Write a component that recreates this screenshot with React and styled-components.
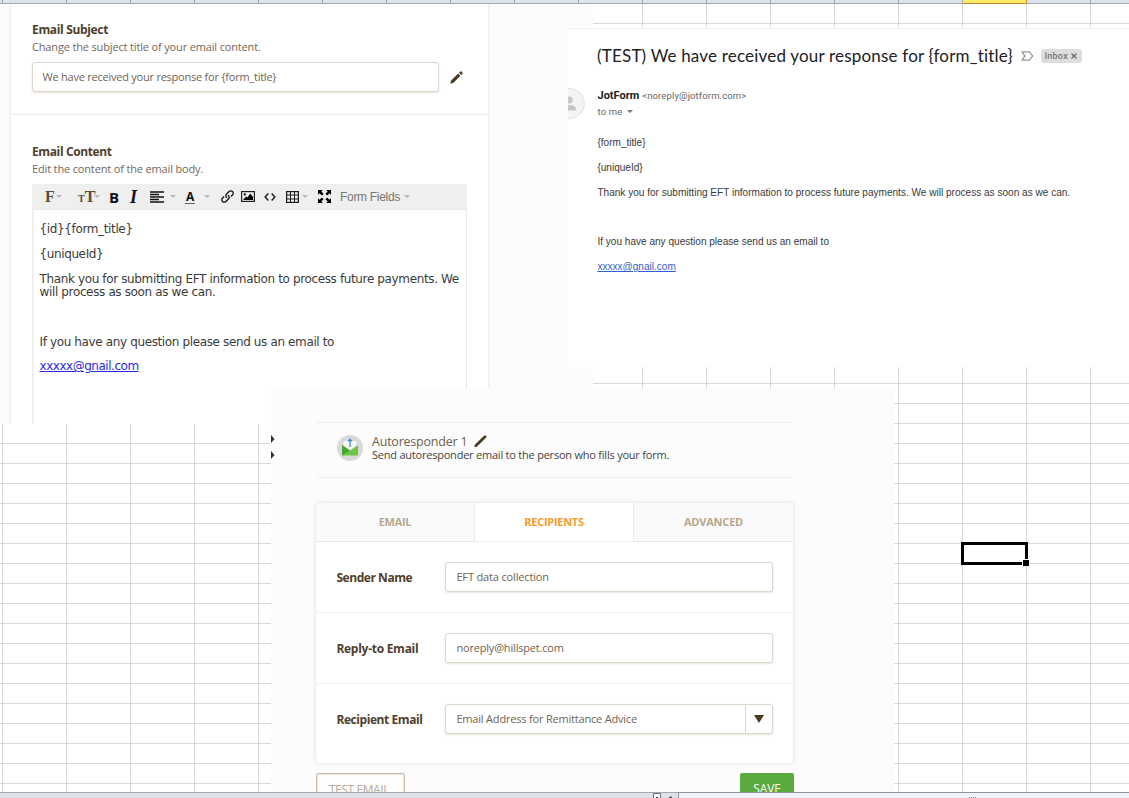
import React from 'react';
import styled, { createGlobalStyle, css } from 'styled-components';
import { ImLink } from 'react-icons/im';

const GlobalStyle = createGlobalStyle`
  * {
    box-sizing: border-box;
  }

  body {
    margin: 0;
    overflow: hidden;
  }

  p {
    margin: 0;
  }
`;

const ui = "'Open Sans', 'Noto Sans', sans-serif";
const arial = "'Liberation Sans', Arial, sans-serif";

/* spreadsheet */

const Sheet = styled.main`
  position: relative;
  display: flex;
  flex-direction: column;
  width: 1129px;
  height: 798px;
  overflow: hidden;
  background: #fff;
  font-family: ${ui};
`;

const ColumnHeaders = styled.div`
  display: flex;
  height: 4px;
  flex: none;
  background: #dee2ea;
  border-bottom: 1px solid #a5a8b0;
`;

const ColumnHeader = styled.div`
  flex: none;
  width: ${({ $width }) => $width || 64}px;
  height: ${({ $active }) => ($active ? 4 : 3)}px;
  border-right: 1px solid ${({ $active }) => ($active ? '#c08a2c' : '#a5a8b0')};
  ${({ $active }) =>
    $active &&
    css`
      background: #ffe965;
      border-bottom: 1px solid #c08a2c;
    `}
`;

const Cells = styled.div`
  flex: 1;
  background-image: linear-gradient(to right, #d9d9d9 1px, transparent 1px),
    linear-gradient(to bottom, #d9d9d9 1px, transparent 1px);
  background-size: 64px 20px;
  background-position: 2px 19px;
`;

const SelectedCell = styled.div`
  position: absolute;
  left: 961px;
  top: 542px;
  width: 67px;
  height: 23px;
  border: 3px solid #000;

  &::after {
    content: '';
    position: absolute;
    right: -4px;
    bottom: -4px;
    width: 6px;
    height: 6px;
    background: #000;
    border: 0 solid #fff;
    border-width: 1px 0 0 1px;
  }
`;

const BottomBar = styled.footer`
  display: flex;
  height: 6px;
  flex: none;
  background: #dde2e8;
  border-top: 1px solid #a3a9b3;
`;

const TabSplit = styled.div`
  display: flex;
  width: 25px;
  height: 5px;
  margin-left: 653px;
`;

const ScrollTrack = styled.div`
  flex: 1;
  display: flex;
  justify-content: center;
  align-items: flex-end;
  padding-left: 136px;
  margin-top: -1px;
  background: #eef1f6;
  border: 1px solid #8b939e;
  border-width: 1px 0 0 1px;
`;

const Grip = styled.i`
  width: 7px;
  height: 1px;
  background: repeating-linear-gradient(to right, #888 0 1px, transparent 1px 2px);
`;

/* shared */

const Text = styled.span`
  display: inline-block;
  white-space: nowrap;
  letter-spacing: ${({ $ls }) => $ls || 0}px;
`;

const Label = styled.div`
  height: ${({ $tall }) => ($tall ? 17 : 16)}px;
  padding-top: ${({ $tall }) => ($tall ? 1 : 0)}px;
  font: 700 12px/16px ${ui};
  color: #4f402c;
`;

const Hint = styled.div`
  height: 16px;
  margin: 1px 0 7px;
  font: 400 11px/16px ${ui};
  color: #73675a;
`;

const Field = styled.div`
  display: flex;
  align-items: center;
  width: ${({ $width }) => $width}px;
  height: 30px;
  padding-left: ${({ $pad }) => $pad || 10}px;
  font: 400 11px/16px ${ui};
  color: #6f6454;
  background: #fff;
  border: 1px solid #e0d7cc;
  border-radius: 3px;
  box-shadow: 0 1px 2px rgba(120, 100, 70, 0.18);
`;

const Caret = styled.i`
  width: 0;
  height: 0;
  border: ${({ $size }) => $size || 3}px solid transparent;
  border-top-width: ${({ $size, $drop }) => $drop || $size || 3}px;
  border-bottom: 0;
  border-top-color: ${({ $color }) => $color || '#b3bac0'};
  margin-left: ${({ $gap }) => $gap || 0}px;
`;

/* email editor */

const EditorWindow = styled.section`
  position: absolute;
  left: 0;
  top: 4px;
  width: 593px;
  height: 420px;
  overflow: hidden;
  background: #fcfcfc;
`;

const EditorCard = styled.div`
  width: 477px;
  height: 440px;
  margin-left: 11px;
  background: #fff;
  box-shadow: 0 0 0 1px #f0f0f0, 0 0 3px 1px #efefef;
`;

const Section = styled.div`
  padding: ${({ $top }) => $top}px 0 0 21px;
  height: ${({ $height }) => $height}px;
  border-bottom: 1px solid #ececec;
`;

const FieldRow = styled.div`
  display: flex;
  align-items: center;
  gap: 11px;
`;

const RichText = styled.div`
  width: 435px;
  height: 300px;
  border: 1px solid #efefef;
  border-width: 0 1px 0 2px;
  border-right-color: #e9e9e9;
  border-radius: 2px 2px 0 0;
`;

const Toolbar = styled.div`
  display: flex;
  align-items: center;
  height: 26px;
  margin: 0 -1px 0 -2px;
  padding-left: 13px;
  background: #efefef;
  border-radius: 2px 2px 0 0;
  border-bottom: 1px solid #e9e9e9;
`;

const Tool = styled.span`
  flex: none;
  display: flex;
  align-items: center;
  width: ${({ $width }) => $width}px;
  height: 16px;
  white-space: nowrap;
  color: ${({ $color }) => $color || '#111'};
`;

const Glyph = styled.span`
  font-family: ${({ $sans }) => ($sans ? "'Open Sans', sans-serif" : "'Liberation Serif', serif")};
  font-size: ${({ $size }) => $size}px;
  font-weight: 700;
  font-style: ${({ $italic }) => ($italic ? 'italic' : 'normal')};
  line-height: ${({ $line }) => $line || 16}px;
  align-self: ${({ $low }) => ($low ? 'flex-end' : 'auto')};
`;

const ColorGlyph = styled(Glyph)`
  height: 13px;
  margin-top: 2px;
  padding: 0 1px;
  line-height: 11px;
  border-bottom: 1px solid #666;
`;

const FormFields = styled.span`
  font: 12px/16px ${arial};
  color: #777;
`;

const EditorBody = styled.div`
  padding: 13px 0 0 5.5px;
  font: 12px/13.5px 'DejaVu Sans', Verdana, sans-serif;
  color: #3b3b3b;

  p {
    min-height: 13.5px;
    margin-bottom: 11.3px;
  }
`;

const MailLink = styled(Text)`
  color: ${({ $color }) => $color};
  text-decoration: underline;
`;

/* received mail */

const MailWindow = styled.section`
  position: absolute;
  left: 568px;
  top: 27px;
  width: 561px;
  height: 340px;
  overflow: hidden;
  padding-top: 1px;
  background: #fff;
`;

const MailInner = styled.div`
  border-top: 1px solid #f1f1f1;
  padding-top: 14px;
`;

const SubjectRow = styled.div`
  display: flex;
  align-items: center;
  height: 26px;
  padding-left: 29px;
`;

const Subject = styled.h1`
  margin: 0;
  width: 424px;
  font: 400 17px/26px Lato, sans-serif;
  color: #202124;
`;

const InboxChip = styled.span`
  display: flex;
  align-items: center;
  gap: 3px;
  width: 41px;
  height: 14px;
  margin-left: 7px;
  padding-left: 3.5px;
  font: 500 9px/14px Roboto, sans-serif;
  color: #777;
  background: #ddd;
  border-radius: 3px;
`;

const MailHead = styled.div`
  display: flex;
  gap: 12.5px;
  margin-top: 19px;
  height: 32px;
`;

const Avatar = styled.div`
  width: 31px;
  height: 31px;
  margin-left: -14px;
  background: #f4f4f4;
  border: 1px solid #e2e2e2;
  border-radius: 50%;
  overflow: hidden;
`;

const SenderBlock = styled.div`
  margin-top: -1px;
`;

const Sender = styled.div`
  font: 400 9.5px/15px Roboto, sans-serif;
  color: #666;
  display: flex;
  align-items: center;
  height: 16px;

  b {
    margin-right: 3px;
    font-size: 11px;
    color: #202124;
  }
`;

const MailBody = styled.div`
  padding: 16px 0 0 29.4px;
  font: 10.07px/13px ${arial};
  color: #3a3a3a;

  p {
    min-height: 13px;
    margin-bottom: 11.8px;
  }
`;

/* autoresponder settings */

const ResponderWindow = styled.section`
  position: absolute;
  left: 271px;
  top: 389px;
  width: 623px;
  height: 403px;
  overflow: hidden;
  padding: 33px 100px 0 45px;
  background: #fcfcfc;
`;

const EdgeMarks = styled.svg`
  position: absolute;
  left: 0;
  top: 45px;
`;

const ResponderHead = styled.header`
  display: flex;
  gap: 9px;
  height: 56px;
  padding: 12px 0 0 20px;
  border: 1px solid #eee;
  border-left-color: transparent;
  border-right-color: transparent;
  border-radius: 4px;
`;

const HeadTitle = styled.div`
  display: flex;
  gap: 7px;
  height: 13px;
  font: 400 12.5px/13px ${ui};
  color: #6e5f4e;
`;

const HeadText = styled.div`
  font: 400 11px/14px ${ui};
  color: #444;
`;

const SettingsCard = styled.div`
  width: 477px;
  margin-top: 25px;
  height: 260px;
  background: #fff;
  border-radius: 3px;
  box-shadow: 0 0 0 1px #efefef, 0 0 4px 1px #e9e9e9;
`;

const Tabs = styled.nav`
  display: grid;
  grid-template-columns: 158px 159px 1fr;
  height: 39px;
`;

const Tab = styled.div`
  display: flex;
  align-items: center;
  justify-content: center;
  font: 700 11px/16px ${ui};
  color: ${({ $active }) => ($active ? '#fb9a1f' : '#b8a78f')};
  background: ${({ $active }) => ($active ? '#fff' : '#fafafa')};
  border-bottom: 1px solid ${({ $active }) => ($active ? '#f1f1f1' : '#e8e6e2')};
  border-left: ${({ $divided }) => ($divided ? '1px solid #ecebe8' : '0')};
`;

const SettingRow = styled.div`
  display: grid;
  grid-template-columns: 109px 1fr;
  align-items: center;
  height: 71px;
  padding-left: 20.4px;
  border-bottom: 1px solid ${({ $last }) => ($last ? 'transparent' : '#f0f0f0')};
`;

const DropButton = styled.span`
  display: flex;
  align-items: center;
  justify-content: center;
  width: 27px;
  height: 28px;
  margin-left: auto;
  border-left: 1px solid #e0d7cc;
`;

const Actions = styled.div`
  display: flex;
  justify-content: space-between;
  margin-top: 10px;
`;

const Button = styled.div`
  height: 34px;
  width: ${({ $primary }) => ($primary ? 54 : 89)}px;
  padding-right: ${({ $primary }) => ($primary ? 0 : 3)}px;
  text-align: center;
  font: 400 12px/31px ${ui};
  color: ${({ $primary }) => ($primary ? '#fff' : '#bbaa94')};
  background: ${({ $primary }) => ($primary ? '#5aaa3f' : '#fdfdfd')};
  border: ${({ $primary }) => ($primary ? '0' : '1px solid #cbbca9')};
  box-shadow: ${({ $primary }) => ($primary ? 'none' : 'inset 0 0 0 1px #eee7df')};
  border-radius: 2px;
`;

const Pencil = () => (
  <svg width="13" height="13" viewBox="0 0 13 13" fill="#4a3a26">
    <path d="M0.3 12.7 L1.2 9.5 L8.2 2.6 L10.4 4.8 L3.5 11.8 Z" />
    <path d="M9 1.7 L10.3 0.4 Q11 0 11.6 0.6 L12.4 1.4 Q13 2 12.5 2.7 L11.3 4 Z" />
  </svg>
);

const SlimPencil = () => (
  <svg width="13" height="13" viewBox="0 0 13 13" fill="#4a3a26">
    <path d="M0.4 12.2 L0.8 9.8 L10.3 0.4 L12.3 0.5 L12.2 2.4 L2.8 11.8 Z" />
  </svg>
);

const AlignIcon = () => (
  <svg width="14" height="12" viewBox="0 0 14 12" stroke="#111" strokeWidth="1.6">
    <path d="M0 1H14M0 3.5H9M0 6H14M0 8.5H9M0 11H14" />
  </svg>
);

const ImageIcon = () => (
  <svg width="14" height="11" viewBox="0 0 14 11">
    <rect x="0.6" y="0.6" width="12.8" height="9.8" fill="none" stroke="#222" strokeWidth="1.2" />
    <circle cx="3.8" cy="3.4" r="1.1" />
    <path d="M2 9 L5 5.4 L6.3 6.6 L9.3 2.6 L12 6 V9 Z" />
  </svg>
);

const CodeIcon = () => (
  <svg width="12" height="8" viewBox="0 0 12 8" fill="none" stroke="#222" strokeWidth="1.5">
    <path d="M4.3 0.6 L1.2 4 L4.3 7.4 M7.7 0.6 L10.8 4 L7.7 7.4" />
  </svg>
);

const TableIcon = () => (
  <svg width="13" height="12" viewBox="0 0 13 12" fill="none" stroke="#1c1c1c">
    <rect x="0.6" y="0.6" width="11.8" height="10.8" strokeWidth="1.2" />
    <path d="M4.5 0V12M8.5 0V12M0 4H13M0 8H13" strokeWidth="1" />
  </svg>
);

const ExpandIcon = () => (
  <svg width="13" height="13" viewBox="0 0 13 13">
    <path d="M0 0H4.8L3.3 1.5L5.6 3.8L3.8 5.6L1.5 3.3L0 4.8Z M13 0V4.8L11.5 3.3L9.2 5.6L7.4 3.8L9.7 1.5L8.2 0Z M0 13V8.2L1.5 9.7L3.8 7.4L5.6 9.2L3.3 11.5L4.8 13Z M13 13H8.2L9.7 11.5L7.4 9.2L9.2 7.4L11.5 9.7L13 8.2Z" />
  </svg>
);

const ImportantMarker = () => (
  <svg width="13" height="10" viewBox="0 0 13 10" fill="none" stroke="#999" strokeWidth="1.3">
    <path d="M1 0.8 H8.3 L11.8 5 L8.3 9.2 H1 L4 5 Z" />
  </svg>
);

const PersonIcon = () => (
  <svg width="29" height="29" viewBox="0 0 29 29" fill="#c6c6c6">
    <circle cx="14.2" cy="11" r="3.6" />
    <path d="M6.8 21.5 V19.5 Q7 16 14.2 16 Q20.5 16 20.8 19.5 V21.5 Z" />
  </svg>
);

const MailBadge = () => (
  <svg width="26" height="26" viewBox="0 0 26 26">
    <circle cx="13" cy="13" r="13" fill="#d9d9d9" />
    <path d="M6.5 6 H19.5 V16 H6.5 Z" fill="#f7f7f7" />
    <path d="M5 10 L13 15.5 L21 10 V20.5 H5 Z" fill="#6cc644" />
    <path d="M5 10 L13 15.5 L5 20.5 Z" fill="#4ba532" />
    <path d="M13 12 V4.5 M11.2 6.2 L13 4.2 L14.8 6.2" fill="none" stroke="#3f8fd6" strokeWidth="1.3" />
  </svg>
);

const SplitMarks = () => (
  <svg width="22" height="5" viewBox="0 0 22 5">
    <path d="M0.5 5 V0.5 H7.5 V5" fill="#fff" stroke="#6d747e" />
    <path d="M3 4 H5 V5 H3 Z M18.5 3 V5 H15.5 Z" fill="#222" />
  </svg>
);

export default function App() {
  const headers = Array.from({ length: 17 }, (_, i) => i);

  return (
    <Sheet>
      <GlobalStyle />
      <ColumnHeaders>
        <ColumnHeader $width={3} />
        {headers.map((i) => (
          <ColumnHeader key={i} $active={i === 15} />
        ))}
      </ColumnHeaders>
      <Cells />
      <BottomBar>
        <TabSplit><SplitMarks /></TabSplit>
        <ScrollTrack><Grip /></ScrollTrack>
      </BottomBar>
      <SelectedCell />

      <EditorWindow>
        <EditorCard>
          <Section $top={18} $height={111}>
            <Label><Text $ls={-0.34}>Email Subject</Text></Label>
            <Hint><Text $ls={-0.155}>Change the subject title of your email content.</Text></Hint>
            <FieldRow>
              <Field $width={407} $pad={9.5}>
                <Text $ls={-0.23}>We have received your response for {'{form_title}'}</Text>
              </Field>
              <Pencil />
            </FieldRow>
          </Section>
          <Section $top={29} $height={400}>
            <Label><Text $ls={-0.38}>Email Content</Text></Label>
            <Hint><Text $ls={-0.155}>Edit the content of the email body.</Text></Hint>
            <RichText>
              <Toolbar>
                <Tool $width={33} $color="#5b4a35"><Glyph $size={16}>F</Glyph><Caret $gap={1} /></Tool>
                <Tool $width={31} $color="#5b4a35">
                  <Glyph $size={10} $line={12} $low>T</Glyph>
                  <Glyph $size={16}>T</Glyph>
                  <Caret $gap={-1} />
                </Tool>
                <Tool $width={21}><Glyph $size={15} $line={14} $sans>B</Glyph></Tool>
                <Tool $width={20}><Glyph $size={18} $italic>I</Glyph></Tool>
                <Tool $width={35}><AlignIcon /><Caret $gap={6} /></Tool>
                <Tool $width={36}><ColorGlyph $size={12} $sans>A</ColorGlyph><Caret $gap={9} /></Tool>
                <Tool $width={20}><ImLink size={13} /></Tool>
                <Tool $width={23}><ImageIcon /></Tool>
                <Tool $width={22}><CodeIcon /></Tool>
                <Tool $width={32}><TableIcon /><Caret $gap={3} /></Tool>
                <Tool $width={22}><ExpandIcon /></Tool>
                <FormFields><Text $ls={-0.3}>Form Fields</Text></FormFields>
                <Caret $gap={4} />
              </Toolbar>
              <EditorBody>
                <p><Text $ls={-0.36}>{'{id}{form_title}'}</Text></p>
                <p><Text $ls={-0.38}>{'{uniqueId}'}</Text></p>
                <p>
                  <Text $ls={-0.365}>Thank you for submitting EFT information to process future payments. We</Text>
                  <br />
                  <Text $ls={-0.36}>will process as soon as we can.</Text>
                </p>
                <p />
                <p><Text $ls={-0.37}>If you have any question please send us an email to</Text></p>
                <p><MailLink $color="#2a2ae8" $ls={-0.47}>xxxxx@gnail.com</MailLink></p>
              </EditorBody>
            </RichText>
          </Section>
        </EditorCard>
      </EditorWindow>

      <MailWindow>
        <MailInner>
          <SubjectRow>
            <Subject>
              <Text $ls={0.19}>(TEST) We have received your response for {'{form_title}'}</Text>
            </Subject>
            <ImportantMarker />
            <InboxChip>
              <Text $ls={0.25}>Inbox</Text>
              <svg width="6" height="6" viewBox="0 0 6 6" stroke="#666" strokeWidth="1.2">
                <path d="M0.5 0.5 L5.5 5.5 M5.5 0.5 L0.5 5.5" />
              </svg>
            </InboxChip>
          </SubjectRow>
          <MailHead>
            <Avatar><PersonIcon /></Avatar>
            <SenderBlock>
              <Sender>
                <b><Text>JotForm</Text></b>
                <Text $ls={0.12}>&lt;noreply@jotform.com&gt;</Text>
              </Sender>
              <Sender><Text $ls={0.15}>to me</Text><Caret $gap={5} $color="#777" /></Sender>
            </SenderBlock>
          </MailHead>
          <MailBody>
            <p><Text>{'{form_title}'}</Text></p>
            <p><Text>{'{uniqueId}'}</Text></p>
            <p>
              <Text>
                Thank you for submitting EFT information to process future payments. We will process as soon as we can.
              </Text>
            </p>
            <p />
            <p><Text>If you have any question please send us an email to</Text></p>
            <p><MailLink $color="#2f62d0">xxxxx@gnail.com</MailLink></p>
          </MailBody>
        </MailInner>
      </MailWindow>

      <ResponderWindow>
        <EdgeMarks width="4" height="26" viewBox="0 0 4 26" fill="#2b2f38">
          <path d="M0 1 L3.5 5 L0 9 Z M0 17 L3.5 21 L0 25 Z" />
        </EdgeMarks>
        <ResponderHead>
          <MailBadge />
          <div>
            <HeadTitle><Text $ls={-0.22}>Autoresponder 1</Text><SlimPencil /></HeadTitle>
            <HeadText><Text $ls={-0.22}>Send autoresponder email to the person who fills your form.</Text></HeadText>
          </div>
        </ResponderHead>
        <SettingsCard>
          <Tabs>
            <Tab><Text $ls={-0.27}>EMAIL</Text></Tab>
            <Tab $active $divided><Text $ls={-0.27}>RECIPIENTS</Text></Tab>
            <Tab $divided><Text $ls={-0.2}>ADVANCED</Text></Tab>
          </Tabs>
          <SettingRow>
            <Label $tall><Text $ls={-0.45}>Sender Name</Text></Label>
            <Field $width={328}><Text $ls={-0.15}>EFT data collection</Text></Field>
          </SettingRow>
          <SettingRow>
            <Label $tall><Text $ls={-0.27}>Reply-to Email</Text></Label>
            <Field $width={328}><Text $ls={-0.18}>noreply@hillspet.com</Text></Field>
          </SettingRow>
          <SettingRow $last>
            <Label $tall><Text $ls={-0.43}>Recipient Email</Text></Label>
            <Field $width={328}>
              <Text $ls={-0.19}>Email Address for Remittance Advice</Text>
              <DropButton><Caret $size={5} $drop={8} $color="#4a3a20" /></DropButton>
            </Field>
          </SettingRow>
        </SettingsCard>
        <Actions>
          <Button><Text $ls={-0.4}>TEST EMAIL</Text></Button>
          <Button $primary><Text $ls={-0.1}>SAVE</Text></Button>
        </Actions>
      </ResponderWindow>
    </Sheet>
  );
}
